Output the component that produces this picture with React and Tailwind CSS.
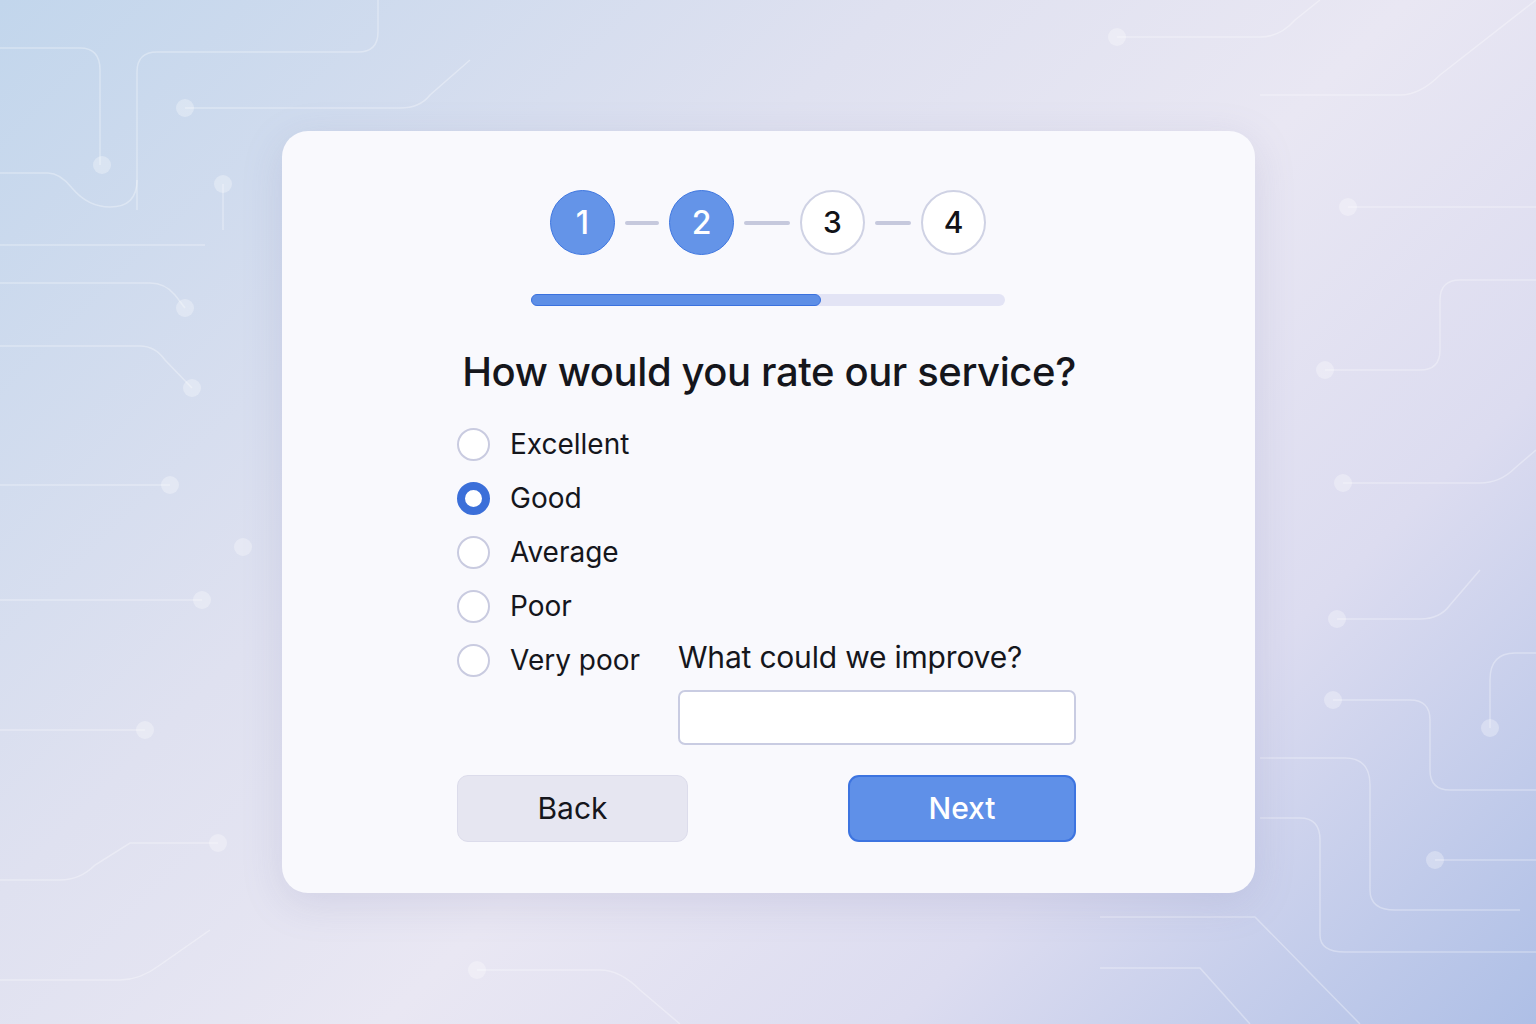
import React from "react";

const options = ["Excellent", "Good", "Average", "Poor"];

const Radio = ({ checked }) =>
  checked ? (
    <span className="w-[33px] h-[33px] rounded-full border-[8px] border-[#3b6fd9] bg-white shrink-0" />
  ) : (
    <span className="w-[33px] h-[33px] rounded-full border-2 border-[#c9cbe0] bg-white shrink-0" />
  );

const Step = ({ n, active }) =>
  active ? (
    <div className="w-[65px] h-[65px] rounded-full bg-[#6494e8] border border-[#3f77e0] flex items-center justify-center text-white text-[32px] font-medium">
      {n}
    </div>
  ) : (
    <div className="w-[65px] h-[65px] rounded-full bg-white border-2 border-[#cfd2e4] flex items-center justify-center text-[#111218] text-[30px] font-medium">
      {n}
    </div>
  );

// faint circuit traces behind the card
const Circuit = () => (
  <svg
    className="absolute inset-0 w-full h-full"
    viewBox="0 0 1536 1024"
    preserveAspectRatio="none"
    fill="none"
  >
    <g stroke="#ffffff" strokeOpacity="0.32" strokeWidth="1.5">
      <path d="M0 48 H80 Q100 48 100 70 V165" />
      <path d="M137 210 V72 Q137 52 157 52 H358 Q378 52 378 32 V0" />
      <path d="M0 173 H48 Q60 173 72 188 Q88 207 110 207 Q137 207 137 180" />
      <path d="M185 108 H400 Q420 108 430 95 L470 60" />
      <path d="M223 184 V230" />
      <path d="M0 245 H205" />
      <path d="M0 283 H150 Q165 283 175 295 L185 308" />
      <path d="M0 346 H140 Q155 346 165 360 L192 388" />
      <path d="M0 485 H170" />
      <path d="M0 600 H202" />
      <path d="M0 730 H145" />
      <path d="M0 880 H60 Q80 880 95 865 L130 843 H218" />
      <path d="M0 980 H120 Q140 980 160 965 L210 930" />
      <path d="M477 970 H600 Q620 970 640 990 L680 1024" />
      <path d="M1117 37 H1260 Q1280 37 1295 20 L1320 0" />
      <path d="M1348 207 H1536" />
      <path d="M1260 95 H1400 Q1420 95 1440 75 L1536 0" />
      <path d="M1325 370 H1420 Q1440 370 1440 350 V300 Q1440 280 1460 280 H1536" />
      <path d="M1343 483 H1480 Q1500 483 1515 468 L1536 450" />
      <path d="M1337 619 H1420 Q1440 619 1450 605 L1480 570" />
      <path d="M1333 700 H1410 Q1430 700 1430 720 V770 Q1430 790 1450 790 H1536" />
      <path d="M1260 758 H1345 Q1370 758 1370 785 V890 Q1370 910 1395 910 H1520" />
      <path d="M1490 728 V680 Q1490 653 1515 653 H1536" />
      <path d="M1435 860 H1536" />
      <path d="M1260 818 H1300 Q1320 818 1320 840 V935 Q1320 952 1345 952 H1536" />
      <path d="M1100 917 H1255 L1360 1024" />
      <path d="M1100 968 H1200 L1250 1024" />
    </g>
    <g fill="#ffffff" fillOpacity="0.3">
      <circle cx="102" cy="165" r="9" />
      <circle cx="185" cy="108" r="9" />
      <circle cx="223" cy="184" r="9" />
      <circle cx="185" cy="308" r="9" />
      <circle cx="192" cy="388" r="9" />
      <circle cx="170" cy="485" r="9" />
      <circle cx="243" cy="547" r="9" />
      <circle cx="202" cy="600" r="9" />
      <circle cx="145" cy="730" r="9" />
      <circle cx="218" cy="843" r="9" />
      <circle cx="477" cy="970" r="9" />
      <circle cx="1117" cy="37" r="9" />
      <circle cx="1348" cy="207" r="9" />
      <circle cx="1325" cy="370" r="9" />
      <circle cx="1343" cy="483" r="9" />
      <circle cx="1337" cy="619" r="9" />
      <circle cx="1333" cy="700" r="9" />
      <circle cx="1490" cy="728" r="9" />
      <circle cx="1435" cy="860" r="9" />
    </g>
  </svg>
);

export default function App() {
  return (
    <div
      className="relative w-[1536px] h-[1024px] overflow-hidden flex items-start justify-center bg-[linear-gradient(135deg,#c2d6ec_0%,#dfe1f0_35%,#e9e7f3_55%,#dcdcf0_75%,#aebfe6_100%)]"
      style={{ fontFamily: "Inter, 'Noto Sans', sans-serif" }}
    >
      <Circuit />

      {/* Card */}
      <div className="relative mt-[131px] w-[973px] h-[762px] rounded-[26px] bg-[#f9f9fd] shadow-[0_10px_40px_rgba(120,120,170,0.18)] flex flex-col items-center pt-[59px]">
        {/* Steps */}
        <div className="flex items-center">
          <Step n="1" active />
          <div className="w-[34px] h-[4px] rounded-full bg-[#c6c9dd] mx-[10px]" />
          <Step n="2" active />
          <div className="w-[46px] h-[4px] rounded-full bg-[#c6c9dd] mx-[10px]" />
          <Step n="3" />
          <div className="w-[36px] h-[4px] rounded-full bg-[#c6c9dd] mx-[10px]" />
          <Step n="4" />
        </div>

        {/* Progress */}
        <div className="mt-[39px] w-[474px] h-[12px] rounded-full bg-[#e3e4f5] flex">
          <div className="w-[290px] h-full rounded-full bg-[#5e8fe6] border border-[#3b72de]" />
        </div>

        <div className="w-[619px] mt-[42px] -ml-[3px]">
          <h1 className="text-[40px] leading-[48px] font-medium text-[#15161c] tracking-[-0.4px] text-center whitespace-nowrap ml-[5px]">
            How would you rate our service?
          </h1>

          <div className="mt-[32px] flex flex-col gap-[22px]">
            {options.map((o) => (
              <label key={o} className="flex items-center gap-[20px] h-[32px]">
                <Radio checked={o === "Good"} />
                <span className="text-[28px] text-[#15161c]">{o}</span>
              </label>
            ))}

            <div className="flex items-start">
              <label className="w-[221px] flex items-center gap-[20px] h-[32px]">
                <Radio />
                <span className="text-[28px] text-[#15161c]">Very poor</span>
              </label>
              <div className="flex-1 flex flex-col -mt-[4px]">
                <span className="text-[30px] leading-[34px] text-[#15161c] tracking-[-0.2px]">
                  What could we improve?
                </span>
                <input
                  type="text"
                  className="mt-[16px] w-full h-[55px] rounded-[7px] border-2 border-[#c9cce2] bg-white outline-none"
                />
              </div>
            </div>
          </div>

          {/* Actions */}
          <div className="mt-[30px] flex justify-between">
            <button className="w-[231px] h-[67px] rounded-[11px] bg-[#e6e6f1] border border-[#dcdceb] text-[30px] text-[#15161c]">
              Back
            </button>
            <button className="w-[228px] h-[67px] rounded-[11px] bg-[#5f90e8] border-2 border-[#3d74e0] text-[30px] font-medium text-white">
              Next
            </button>
          </div>
        </div>
      </div>
    </div>
  );
}
